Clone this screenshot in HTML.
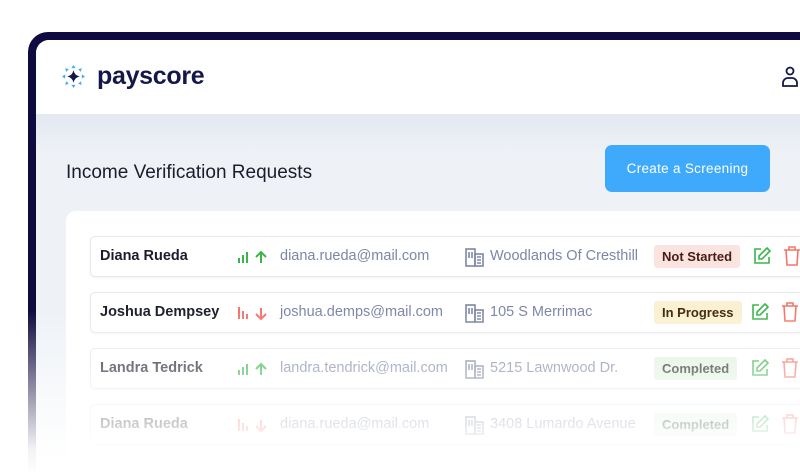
<!DOCTYPE html>
<html style="width:800px;height:474px;overflow:hidden"><head><style>
*{margin:0;padding:0;box-sizing:border-box}
body{width:800px;height:474px;background:#fff;position:relative;overflow:hidden;font-family:"Liberation Sans",sans-serif}
.wrap{position:absolute;left:0;top:0;width:800px;height:474px;overflow:hidden}
.frame{position:absolute;left:28px;top:32px;width:772px;height:442px;background:#0f0a3f;border-radius:20px 0 0 0}
.inner{position:absolute;left:36px;top:40px;width:764px;height:434px;background:#eef2f7;border-radius:13px 0 0 0;overflow:hidden}
.hdr{position:absolute;left:0;top:0;width:100%;height:74px;background:#fff}
.shade{position:absolute;left:0;top:74px;width:100%;height:40px;background:linear-gradient(#e3e8f1,#eef2f7)}
.logo{position:absolute;top:62px;font-size:25px;font-weight:bold;color:#14174a;letter-spacing:-0.3px}
.title{position:absolute;left:66px;top:162px;font-size:19px;color:#1b1d2b}
.btn{position:absolute;left:605px;top:145px;width:165px;height:47px;background:#3fa9fb;border-radius:7px;color:#fff;font-size:13.5px;text-align:center;line-height:47px;letter-spacing:0.3px}
.card{position:absolute;left:66px;top:211px;width:734px;height:263px;background:#fff;border-radius:10px 0 0 0}
.row{position:absolute;left:90px;width:710px;height:41px;background:#fff;border:1px solid #e6e8ec;border-right:none;border-radius:5px 0 0 5px;box-shadow:0 1px 2px rgba(0,0,0,.05)}
.row span{position:absolute;top:11px;font-size:14.5px;white-space:nowrap}
.nm{left:9px;font-weight:bold;color:#1b1d2b}
.em{left:189px;color:#7d86a6}
.ad{left:399px;color:#7d86a6}
.bd{left:563px;top:8px!important;height:23px;line-height:23px;padding:0 8px;font-size:13px!important;font-weight:bold;border-radius:3px}
.ic{position:absolute}
.fade{position:absolute;left:0;top:310px;width:800px;height:164px;background:linear-gradient(rgba(255,255,255,0),rgba(255,255,255,.5) 45%,rgba(255,255,255,.95) 85%,#fff)}
</style></head><body><div class="wrap">
<div class="frame"></div>
<div class="inner"><div class="hdr"></div><div class="shade"></div></div>
<svg style="position:absolute;left:61px;top:64px" width="25" height="25" viewBox="0 0 24 24"><g fill="#4aa8f0"><path d="M12 1l2 3h-4zM12 23l2-3h-4zM1 12l3 2v-4zM23 12l-3 2v-4zM4 4l3.5 1-2.5 2.5zM20 4l-3.5 1 2.5 2.5zM4 20l3.5-1-2.5-2.5zM20 20l-3.5-1 2.5-2.5z"/></g><path d="M12 6Q13 11 18 12Q13 13 12 18Q11 13 6 12Q11 11 12 6z" fill="#14174a"/></svg>
<div class="logo" style="left:97px">payscore</div>
<svg style="position:absolute;left:781px;top:66px" width="18" height="22" viewBox="0 0 18 22"><circle cx="9" cy="5" r="3.5" fill="none" stroke="#14174a" stroke-width="1.8"/><path d="M2 20v-3a5 5 0 0 1 5-5h4a5 5 0 0 1 5 5v3z" fill="none" stroke="#14174a" stroke-width="1.8"/></svg>
<div class="title">Income Verification Requests</div>
<div class="btn">Create a Screening</div>
<div class="card"></div>

<div class="row" style="top:236px"><span class="nm">Diana Rueda</span>
<svg class="ic" style="left:146px;top:13px" width="30" height="14"><g fill="#3bb54a"><rect x="1" y="8" width="2" height="5"/><rect x="5" y="5" width="2" height="8"/><rect x="9" y="2" width="2" height="11"/><path d="M24 13V3M19 7l5-5 5 5" stroke="#3bb54a" stroke-width="2" fill="none"/></g></svg>
<span class="em">diana.rueda@mail.com</span>
<svg class="ic" style="left:374px;top:10px" width="20" height="20" viewBox="0 0 20 20"><g fill="none" stroke="#7d86a6" stroke-width="1.6"><rect x="1" y="2" width="9" height="17"/><rect x="10" y="7" width="8" height="12"/><path d="M4 5v6M7 5v6M12 10h4M12 13h4M12 16h4"/></g></svg>
<span class="ad">Woodlands Of Cresthill</span>
<span class="bd" style="background:#fbe3e0;color:#4a1c15">Not Started</span>
<svg class="ic" style="left:662px;top:10px" width="18" height="18" viewBox="0 0 18 18"><g fill="none" stroke="#3bb54a" stroke-width="1.6"><path d="M8 2H2v14h14v-6"/><path d="M14 1l3 3-8 8H6V9z"/></g></svg>
<svg class="ic" style="left:692px;top:9px" width="18" height="20" viewBox="0 0 18 20"><g fill="none" stroke="#f4766a" stroke-width="1.6"><path d="M1 4h16M6 4V1h6v3M3 4l1 15h10l1-15"/></g></svg>
</div>

<div class="row" style="top:292px"><span class="nm">Joshua Dempsey</span>
<svg class="ic" style="left:146px;top:13px" width="30" height="14"><g fill="#f4766a"><rect x="1" y="1" width="2" height="12"/><rect x="5" y="5" width="2" height="8"/><rect x="9" y="8" width="2" height="5"/><path d="M24 2v10M19 8l5 5 5-5" stroke="#f4766a" stroke-width="2" fill="none"/></g></svg>
<span class="em">joshua.demps@mail.com</span>
<svg class="ic" style="left:374px;top:10px" width="20" height="20" viewBox="0 0 20 20"><g fill="none" stroke="#7d86a6" stroke-width="1.6"><rect x="1" y="2" width="9" height="17"/><rect x="10" y="7" width="8" height="12"/><path d="M4 5v6M7 5v6M12 10h4M12 13h4M12 16h4"/></g></svg>
<span class="ad">105 S Merrimac</span>
<span class="bd" style="background:#fbf0d2;color:#3d2c0a">In Progress</span>
<svg class="ic" style="left:660px;top:10px" width="18" height="18" viewBox="0 0 18 18"><g fill="none" stroke="#3bb54a" stroke-width="1.6"><path d="M8 2H2v14h14v-6"/><path d="M14 1l3 3-8 8H6V9z"/></g></svg>
<svg class="ic" style="left:690px;top:9px" width="18" height="20" viewBox="0 0 18 20"><g fill="none" stroke="#f4766a" stroke-width="1.6"><path d="M1 4h16M6 4V1h6v3M3 4l1 15h10l1-15"/></g></svg>
</div>

<div class="row" style="top:348px"><span class="nm">Landra Tedrick</span>
<svg class="ic" style="left:146px;top:13px" width="30" height="14"><g fill="#3bb54a"><rect x="1" y="8" width="2" height="5"/><rect x="5" y="5" width="2" height="8"/><rect x="9" y="2" width="2" height="11"/><path d="M24 13V3M19 7l5-5 5 5" stroke="#3bb54a" stroke-width="2" fill="none"/></g></svg>
<span class="em">landra.tendrick@mail.com</span>
<svg class="ic" style="left:374px;top:10px" width="20" height="20" viewBox="0 0 20 20"><g fill="none" stroke="#7d86a6" stroke-width="1.6"><rect x="1" y="2" width="9" height="17"/><rect x="10" y="7" width="8" height="12"/><path d="M4 5v6M7 5v6M12 10h4M12 13h4M12 16h4"/></g></svg>
<span class="ad">5215 Lawnwood Dr.</span>
<span class="bd" style="background:#e3f2e1;color:#1b2b1b">Completed</span>
<svg class="ic" style="left:660px;top:10px" width="18" height="18" viewBox="0 0 18 18"><g fill="none" stroke="#3bb54a" stroke-width="1.6"><path d="M8 2H2v14h14v-6"/><path d="M14 1l3 3-8 8H6V9z"/></g></svg>
<svg class="ic" style="left:690px;top:9px" width="18" height="20" viewBox="0 0 18 20"><g fill="none" stroke="#f4766a" stroke-width="1.6"><path d="M1 4h16M6 4V1h6v3M3 4l1 15h10l1-15"/></g></svg>
</div>

<div class="row" style="top:404px"><span class="nm">Diana Rueda</span>
<svg class="ic" style="left:146px;top:13px" width="30" height="14"><g fill="#f4766a"><rect x="1" y="1" width="2" height="12"/><rect x="5" y="5" width="2" height="8"/><rect x="9" y="8" width="2" height="5"/><path d="M24 2v10M19 8l5 5 5-5" stroke="#f4766a" stroke-width="2" fill="none"/></g></svg>
<span class="em">diana.rueda@mail.com</span>
<svg class="ic" style="left:374px;top:10px" width="20" height="20" viewBox="0 0 20 20"><g fill="none" stroke="#7d86a6" stroke-width="1.6"><rect x="1" y="2" width="9" height="17"/><rect x="10" y="7" width="8" height="12"/><path d="M4 5v6M7 5v6M12 10h4M12 13h4M12 16h4"/></g></svg>
<span class="ad">3408 Lumardo Avenue</span>
<span class="bd" style="background:#e3f2e1;color:#1b2b1b">Completed</span>
<svg class="ic" style="left:660px;top:10px" width="18" height="18" viewBox="0 0 18 18"><g fill="none" stroke="#3bb54a" stroke-width="1.6"><path d="M8 2H2v14h14v-6"/><path d="M14 1l3 3-8 8H6V9z"/></g></svg>
<svg class="ic" style="left:690px;top:9px" width="18" height="20" viewBox="0 0 18 20"><g fill="none" stroke="#f4766a" stroke-width="1.6"><path d="M1 4h16M6 4V1h6v3M3 4l1 15h10l1-15"/></g></svg>
</div>
<div class="fade"></div>
</div></body></html>
